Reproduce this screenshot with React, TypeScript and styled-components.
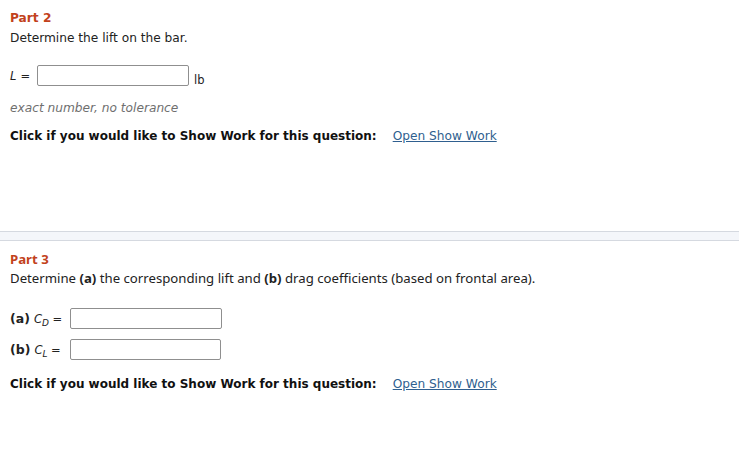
import React from "react";
import styled, { createGlobalStyle } from "styled-components";

const Global = createGlobalStyle`
  html, body { margin: 0; padding: 0; background: #fff; }
  body { font-family: "DejaVu Sans", Verdana, sans-serif; font-size: 12.2px; color: #222; }
`;

const Page = styled.div`
  width: 739px;
  height: 470px;
  overflow: hidden;
  display: flex;
  flex-direction: column;
`;

const Section = styled.section<{ $h: number }>`
  height: ${(p) => p.$h}px;
  padding: 10px 10px 0 10px;
  box-sizing: border-box;
  display: flex;
  flex-direction: column;
`;

const Heading = styled.div<{ $narrow?: boolean }>`
  font-family: ${(p) => (p.$narrow ? '"Noto Sans", sans-serif' : '"DejaVu Sans", Verdana, sans-serif')};
  font-weight: bold;
  font-size: ${(p) => (p.$narrow ? "13.2px" : "12.2px")};
  line-height: 16px;
  color: #c2421c;
`;

const Prompt = styled.div<{ $narrow?: boolean; $mt: number }>`
  font-family: ${(p) => (p.$narrow ? '"Noto Sans", sans-serif' : '"DejaVu Sans", Verdana, sans-serif')};
  font-size: ${(p) => (p.$narrow ? "13.2px" : "12.2px")};
  line-height: 16px;
  margin-top: ${(p) => p.$mt}px;
  color: #222;
  b { font-weight: bold; }
`;

const AnswerRow = styled.div<{ $mt: number }>`
  display: flex;
  align-items: center;
  margin-top: ${(p) => p.$mt}px;
  height: 21px;
`;

const Label = styled.span<{ $w: number }>`
  width: ${(p) => p.$w}px;
  font-size: 11.5px;
  white-space: nowrap;
  color: #222;
  display: inline-flex;
  align-items: baseline;
  gap: 4px;
  b { font-weight: bold; font-size: 12.5px; }
  i { font-style: italic; }
  sub { font-size: 9px; font-style: italic; vertical-align: -3px; line-height: 0; }
`;

const Field = styled.div<{ $w: number }>`
  width: ${(p) => p.$w}px;
  height: 21px;
  box-sizing: border-box;
  border: 1px solid #8f8f8f;
  border-radius: 2px;
  background: #fff;
`;

const Unit = styled.span`
  margin-left: 5px;
  margin-top: 8px;
  font-size: 11.5px;
  color: #222;
`;

const Note = styled.div`
  margin-top: 15px;
  font-style: italic;
  font-size: 12.2px;
  color: #6f6f6f;
`;

const WorkRow = styled.div<{ $mt: number }>`
  display: flex;
  align-items: baseline;
  margin-top: ${(p) => p.$mt}px;
  font-size: 12.2px;
`;

const WorkLabel = styled.span`
  font-weight: bold;
  font-size: 12px;
  color: #111;
`;

const WorkLink = styled.a`
  margin-left: 16px;
  color: #2f5f8f;
  text-decoration: underline;
  cursor: pointer;
`;

const Divider = styled.div`
  height: 10px;
  box-sizing: border-box;
  border-top: 1px solid #d5d9e0;
  border-bottom: 1px solid #d5d9e0;
  background: #f4f6fa;
`;

export default function App() {
  return (
    <Page>
      <Global />
      <Section $h={231}>
        <Heading>Part 2</Heading>
        <Prompt $mt={4}>Determine the lift on the bar.</Prompt>
        <AnswerRow $mt={19}>
          <Label $w={27}>
            <i>L</i> =
          </Label>
          <Field $w={152} />
          <Unit>lb</Unit>
        </AnswerRow>
        <Note>exact number, no tolerance</Note>
        <WorkRow $mt={14}>
          <WorkLabel>Click if you would like to Show Work for this question:</WorkLabel>
          <WorkLink>Open Show Work</WorkLink>
        </WorkRow>
      </Section>
      <Divider />
      <Section $h={229}>
        <Heading $narrow>Part 3</Heading>
        <Prompt $narrow $mt={3}>
          Determine <b>(a)</b> the corresponding lift and <b>(b)</b> drag coefficients (based on frontal area).
        </Prompt>
        <AnswerRow $mt={22}>
          <Label $w={60}>
            <b>(a)</b>
            <span>
              <i>C</i>
              <sub>D</sub> =
            </span>
          </Label>
          <Field $w={152} />
        </AnswerRow>
        <AnswerRow $mt={10}>
          <Label $w={60}>
            <b>(b)</b>
            <span>
              <i>C</i>
              <sub>L</sub> =
            </span>
          </Label>
          <Field $w={151} />
        </AnswerRow>
        <WorkRow $mt={17}>
          <WorkLabel>Click if you would like to Show Work for this question:</WorkLabel>
          <WorkLink>Open Show Work</WorkLink>
        </WorkRow>
      </Section>
    </Page>
  );
}
